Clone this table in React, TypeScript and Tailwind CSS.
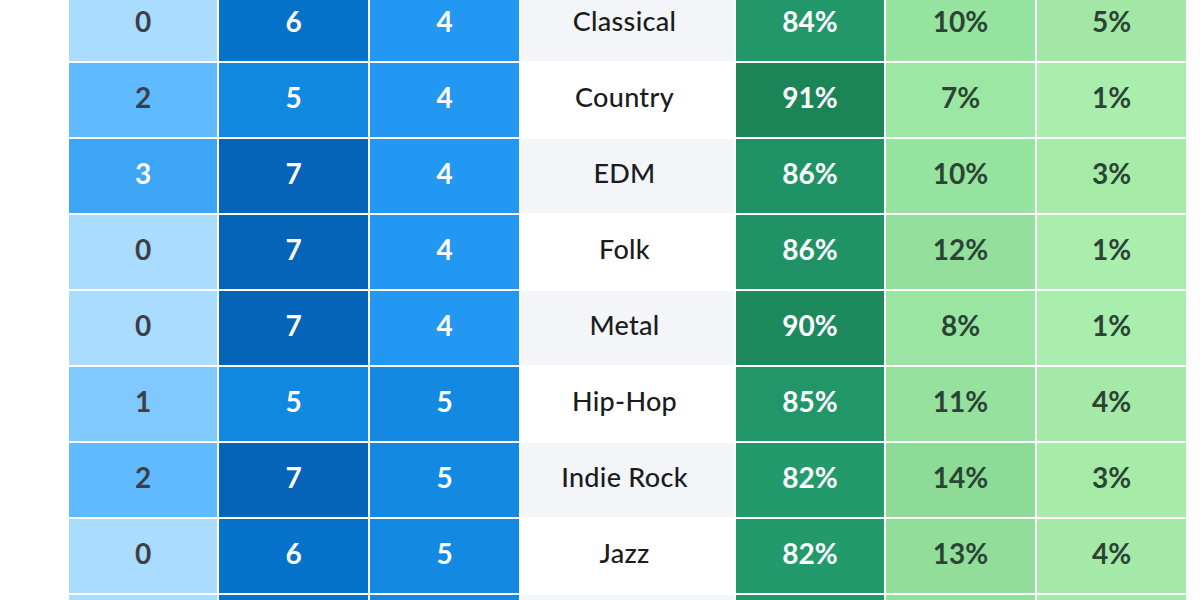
const rows = [
  { a: 0, b: 6, c: 4, genre: 'Classical', d: 84, e: 10, f: 5 },
  { a: 2, b: 5, c: 4, genre: 'Country', d: 91, e: 7, f: 1 },
  { a: 3, b: 7, c: 4, genre: 'EDM', d: 86, e: 10, f: 3 },
  { a: 0, b: 7, c: 4, genre: 'Folk', d: 86, e: 12, f: 1 },
  { a: 0, b: 7, c: 4, genre: 'Metal', d: 90, e: 8, f: 1 },
  { a: 1, b: 5, c: 5, genre: 'Hip-Hop', d: 85, e: 11, f: 4 },
  { a: 2, b: 7, c: 5, genre: 'Indie Rock', d: 82, e: 14, f: 3 },
  { a: 0, b: 6, c: 5, genre: 'Jazz', d: 82, e: 13, f: 4 },
]

const colA: Record<number, string> = {
  0: 'bg-[#aadcff] text-[#3b3f48]',
  1: 'bg-[#80c9ff] text-[#3b3f48]',
  2: 'bg-[#5fbaff] text-[#3b3f48]',
  3: 'bg-[#3ca5f5] text-white',
}
const colB: Record<number, string> = {
  5: 'bg-[#1189e1]',
  6: 'bg-[#0672c9]',
  7: 'bg-[#0563b8]',
}
const colC: Record<number, string> = {
  4: 'bg-[#2298f2]',
  5: 'bg-[#1489e1]',
}
const colD: Record<number, string> = {
  82: 'bg-[#229a6c]',
  84: 'bg-[#21976a]',
  85: 'bg-[#219668]',
  86: 'bg-[#209366]',
  90: 'bg-[#1d8a5e]',
  91: 'bg-[#1b8558]',
}
const colE: Record<number, string> = {
  7: 'bg-[#9ce7a3]',
  8: 'bg-[#9ae5a1]',
  10: 'bg-[#97e3a0]',
  11: 'bg-[#95e19d]',
  12: 'bg-[#93df9b]',
  13: 'bg-[#91dd99]',
  14: 'bg-[#8ddb96]',
}
const colF: Record<number, string> = {
  1: 'bg-[#aaeeae]',
  3: 'bg-[#a7eba9]',
  4: 'bg-[#a5e9a8]',
  5: 'bg-[#a3e7a6]',
}

const cell = 'flex items-center justify-center pb-[6px] text-[28px] font-bold'
const row = 'grid h-[74px] grid-cols-[148px_149px_149px_213px_148px_149px_149px] gap-x-[2px]'

export default function App() {
  return (
    <div className="h-[600px] w-[1200px] overflow-hidden bg-white font-['Lato',sans-serif]">
      <div className="ml-[69px] -mt-[13px] flex flex-col gap-[2px]">
        {rows.map((r, i) => (
          <div key={i} className={row}>
            <div className={`${cell} ${colA[r.a]}`}>{r.a}</div>
            <div className={`${cell} ${colB[r.b]} text-white`}>{r.b}</div>
            <div className={`${cell} ${colC[r.c]} text-white`}>{r.c}</div>
            <div
              className={`flex items-center justify-center pb-[6px] pr-[6px] text-[27px] font-medium tracking-[0.3px] text-[#1c1c1c] ${
                i % 2 === 0 ? 'bg-[#f3f5f9]' : 'bg-white'
              }`}
            >
              {r.genre}
            </div>
            <div className={`${cell} ${colD[r.d]} text-white`}>{r.d}%</div>
            <div className={`${cell} ${colE[r.e]} text-[#2a4534]`}>{r.e}%</div>
            <div className={`${cell} ${colF[r.f]} text-[#2a4534]`}>{r.f}%</div>
          </div>
        ))}
        {/* next row, only its top edge shows */}
        <div className={row}>
          <div className="bg-[#aadcff]" />
          <div className="bg-[#0672c9]" />
          <div className="bg-[#1489e1]" />
          <div className="bg-[#f3f5f9]" />
          <div className="bg-[#21976a]" />
          <div className="bg-[#93df9b]" />
          <div className="bg-[#a5e9a8]" />
        </div>
      </div>
    </div>
  )
}
